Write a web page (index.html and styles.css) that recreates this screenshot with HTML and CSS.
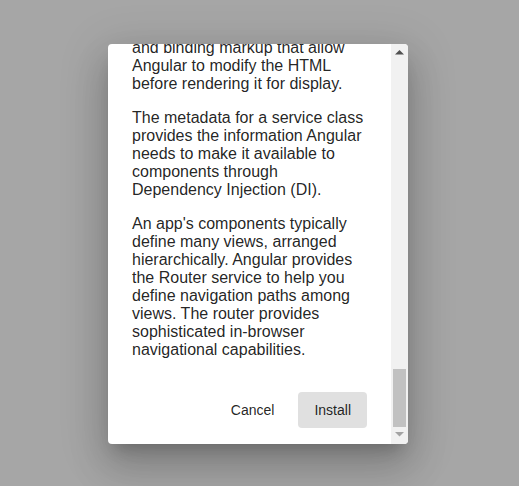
FILE: index.html
```html
<!DOCTYPE html>
<html lang="en">
<head>
<meta charset="utf-8">
<title>Install Angular</title>
<link rel="stylesheet" href="styles.css">
</head>
<body>
<div class="backdrop">
  <div class="dialog">
    <div class="dialog-scroll" id="dialog-scroll">
      <h2 class="dialog-title">Install Angular</h2>
      <div class="dialog-content">
        <h3>Develop across all platforms</h3>
        <p>Learn one way to build applications with Angular and reuse your code and abilities to build apps for any deployment target. For web, mobile web, native mobile and native desktop.</p>
        <h3>Speed &amp; Performance</h3>
        <p>Achieve the maximum speed possible on the Web Platform today, and take it further, via Web Workers and server-side rendering. Angular puts you in control over scalability. Meet huge data requirements by building data models on RxJS, Immutable.js or another push-model.</p>
        <h3>Incredible tooling</h3>
        <p>Build features quickly with simple, declarative templates. Extend the template language with your own components and use a wide array of existing components. Get immediate Angular-specific help and feedback with nearly every IDE and editor. All this comes together so you can focus on building amazing apps rather than trying to make the code work.</p>
        <h3>Loved by millions</h3>
        <p>From prototype through global deployment, Angular delivers the productivity and scalable infrastructure that supports Google's largest applications.</p>
        <h3>What is Angular?</h3>
        <p>Angular is a platform that makes it easy to build applications with the web. Angular combines declarative templates, dependency injection, end to end tooling, and integrated best practices to solve development challenges. Angular empowers developers to build applications that live on the web, mobile, or the desktop</p>
        <h3>Architecture overview</h3>
        <p>Angular is a platform and framework for building client applications in HTML and TypeScript. Angular is itself written in TypeScript. It implements core and optional functionality as a set of TypeScript libraries that you import into your apps.</p>
        <p>The basic building blocks of an Angular application are NgModules, which provide a compilation context for components. NgModules collect related code into functional sets; an Angular app is defined by a set of NgModules. An app always has at least a root module that enables bootstrapping, and typically has many more feature modules.</p>
        <p>Components define views, which are sets of screen elements that Angular can choose among and modify according to your program logic and data. Every app has at least a root component.</p>
        <p>Components use services, which provide specific functionality not directly related to views. Service providers can be injected into components as dependencies, making your code modular, reusable, and efficient.</p>
        <p>Both components and services are simply classes, with decorators that mark their type and provide metadata that tells Angular how to use them.</p>
        <p>The metadata for a component class associates it with a template that defines a view. A template combines ordinary HTML with Angular directives and binding markup that allow Angular to modify the HTML before rendering it for display.</p>
        <p>The metadata for a service class provides the information Angular needs to make it available to components through Dependency Injection (DI).</p>
        <p>An app's components typically define many views, arranged hierarchically. Angular provides the Router service to help you define navigation paths among views. The router provides sophisticated in-browser navigational capabilities.</p>
      </div>
      <div class="dialog-actions">
        <button class="btn" type="button">Cancel</button>
        <button class="btn btn-focused" type="button">Install</button>
      </div>
    </div>
    <div class="scrollbar" aria-hidden="true">
      <div class="sb-btn">
        <svg width="17" height="17" viewBox="0 0 17 17"><path d="M4 10.5 L8.5 6 L13 10.5 Z" fill="#505050"/></svg>
      </div>
      <div class="sb-track">
        <div class="sb-thumb"></div>
      </div>
      <div class="sb-btn">
        <svg width="17" height="17" viewBox="0 0 17 17"><path d="M4 5 L8.5 9.5 L13 5 Z" fill="#a3a3a3"/></svg>
      </div>
    </div>
  </div>
</div>
<script src="script.js"></script>
</body>
</html>
```

FILE: styles.css
```css
html, body {
  margin: 0;
  padding: 0;
}

body {
  background: #a6a6a6;
  font-family: "Liberation Sans", Arial, sans-serif;
}

.backdrop {
  height: 486px;
  box-sizing: border-box;
  padding: 44px 0 0 108px;
  overflow: hidden;
}

.dialog {
  display: flex;
  width: 300px;
  height: 400px;
  background: #fff;
  border-radius: 4px;
  overflow: hidden;
  color: rgba(0, 0, 0, 0.87);
  box-shadow: 0 11px 15px -7px rgba(0, 0, 0, 0.2),
              0 24px 38px 3px rgba(0, 0, 0, 0.14),
              0 9px 46px 8px rgba(0, 0, 0, 0.12);
}

.dialog-scroll {
  flex: 1;
  min-width: 0;
  padding: 24px 24px 0;
  overflow-y: auto;
  scrollbar-width: none;
}

.dialog-scroll::-webkit-scrollbar {
  display: none;
}

.scrollbar {
  display: flex;
  flex-direction: column;
  width: 17px;
  flex: none;
  background: #f1f1f1;
}

.sb-btn {
  height: 17px;
  flex: none;
}

.sb-btn svg {
  display: block;
}

.sb-track {
  flex: 1;
  display: flex;
  flex-direction: column;
  justify-content: flex-end;
}

.sb-thumb {
  height: 58px;
  margin: 0 2px;
  background: #c1c1c1;
}

.dialog-title {
  margin: 0 0 20px;
  font-size: 20px;
  line-height: 32px;
  font-weight: 500;
}

.dialog-content h3 {
  margin: 18px 0;
  font-size: 18.72px;
  line-height: 22px;
  font-weight: 700;
}

.dialog-content h3:first-child {
  margin-top: 0;
}

.dialog-content p {
  margin: 16px 0;
  font-size: 16px;
  line-height: 18px;
}

.dialog-content p:last-child {
  margin-bottom: 0;
}

.dialog-actions {
  display: flex;
  justify-content: flex-end;
  gap: 8px;
  padding: 33px 0 16px;
}

.btn {
  min-width: 64px;
  height: 36px;
  padding: 0 16px;
  border: none;
  border-radius: 4px;
  background: transparent;
  font-family: "Liberation Sans", Arial, sans-serif;
  font-size: 14px;
  color: rgba(0, 0, 0, 0.87);
  cursor: pointer;
}

.btn-focused {
  background: #e0e0e0;
}
```

FILE: script.js
```js
var d = document.getElementById('dialog-scroll');
d.scrollTop = d.scrollHeight;
```
